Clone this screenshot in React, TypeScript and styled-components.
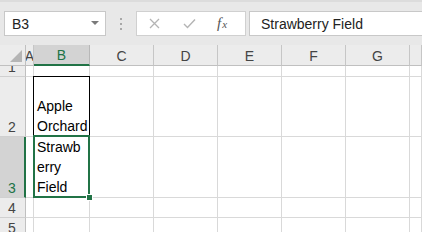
import React from "react";
import styled, { createGlobalStyle, css } from "styled-components";

const Global = createGlobalStyle`
  html, body { margin: 0; padding: 0; background: #ffffff; }
  body { width: 422px; height: 232px; overflow: hidden; font-family: "Liberation Sans", Arial, sans-serif; }
`;

const Page = styled.div`
  width: 422px;
  height: 232px;
  overflow: hidden;
  display: flex;
  flex-direction: column;
`;

const Toolbar = styled.div`
  height: 45px;
  flex: none;
  box-sizing: border-box;
  background: #e8e8e8;
  border-top: 2px solid #dcdcdc;
  padding: 9px 0 0 4px;
  display: flex;
  align-items: flex-start;
`;

const NameBox = styled.div`
  width: 102px;
  height: 25px;
  box-sizing: border-box;
  background: #fff;
  border: 1px solid #c8c8c8;
  display: flex;
  align-items: center;
  justify-content: space-between;
  padding: 0 6px 0 7px;
  font-size: 14px;
  color: #222;
`;

const Caret = styled.span`
  width: 0;
  height: 0;
  border-left: 4px solid transparent;
  border-right: 4px solid transparent;
  border-top: 4px solid #7a7a7a;
  margin-top: -2px;
`;

const Grip = styled.div`
  width: 30px;
  height: 25px;
  display: flex;
  flex-direction: column;
  align-items: center;
  justify-content: center;
  gap: 3px;
`;

const Dot = styled.span`
  width: 2px;
  height: 2px;
  background: #a8a8a8;
`;

const FxButtons = styled.div`
  width: 110px;
  height: 25px;
  box-sizing: border-box;
  background: #fff;
  border: 1px solid #d0d0d0;
  display: flex;
  align-items: center;
  padding-left: 12px;
  gap: 23px;
`;

const Fx = styled.span`
  font-family: "Liberation Serif", "Times New Roman", serif;
  font-style: italic;
  color: #555;
  font-size: 15px;
  display: flex;
  align-items: baseline;
  margin-left: -2px;
  sub {
    font-size: 11px;
    vertical-align: baseline;
    margin-left: 1px;
  }
`;

const FormulaInput = styled.div`
  flex: 1;
  margin-left: 3px;
  height: 25px;
  box-sizing: border-box;
  background: #fff;
  border: 1px solid #c8c8c8;
  border-right: none;
  display: flex;
  align-items: center;
  padding-left: 11px;
  font-size: 14px;
  color: #222;
  white-space: nowrap;
`;

const Sheet = styled.div`
  display: grid;
  grid-template-columns: 26px 8px 56px 64px 64px 64px 64px 64px 1fr;
  grid-template-rows: 21px 11px 60px 61px 20px 20px;
  flex: none;
`;

const cellBase = css`
  box-sizing: border-box;
  overflow: hidden;
  min-width: 0;
`;

const Corner = styled.div`
  ${cellBase};
  background: #ececec;
  border-right: 1px solid #c0c0c0;
  border-bottom: 1px solid #c0c0c0;
  display: flex;
  align-items: flex-end;
  justify-content: flex-end;
  padding: 0 3px 3px 0;
`;

const ColHeader = styled.div<{ $sel?: boolean }>`
  ${cellBase};
  background: ${(p) => (p.$sel ? "#d3d3d3" : "#ececec")};
  color: ${(p) => (p.$sel ? "#217346" : "#444")};
  border-right: 1px solid ${(p) => (p.$sel ? "#b8b8b8" : "#c6c6c6")};
  border-bottom: ${(p) => (p.$sel ? "2px solid #217346" : "1px solid #c0c0c0")};
  display: flex;
  align-items: center;
  justify-content: center;
  font-size: 14px;
  padding-top: 1px;
`;

const RowHeader = styled.div<{ $sel?: boolean }>`
  ${cellBase};
  background: ${(p) => (p.$sel ? "#d3d3d3" : "#ececec")};
  color: ${(p) => (p.$sel ? "#217346" : "#444")};
  border-right: ${(p) => (p.$sel ? "2px solid #217346" : "1px solid #c0c0c0")};
  border-bottom: 1px solid #d0d0d0;
  display: flex;
  align-items: flex-end;
  justify-content: center;
  font-size: 14px;
  line-height: 18px;
  padding-right: ${(p) => (p.$sel ? "0" : "1px")};
`;

const Cell = styled.div<{ $boxed?: boolean; $selected?: boolean }>`
  ${cellBase};
  position: relative;
  overflow: ${(p) => (p.$boxed || p.$selected ? "visible" : "hidden")};
  z-index: ${(p) => (p.$selected ? 3 : p.$boxed ? 2 : 0)};
  background: #fff;
  border-right: 1px solid #d9d9d9;
  border-bottom: 1px solid #d9d9d9;
  display: flex;
  flex-direction: column;
  justify-content: flex-end;
  padding: 0 2px 0 3px;
  font-size: 14px;
  line-height: 20px;
  color: #000;
  white-space: nowrap;
  ${(p) =>
    p.$boxed &&
    css`
      &::after {
        content: "";
        position: absolute;
        top: -1px;
        left: -1px;
        right: -1px;
        bottom: -1px;
        border: 1px solid #000;
        pointer-events: none;
      }
    `}
  ${(p) =>
    p.$selected &&
    css`
      &::after {
        content: "";
        position: absolute;
        top: -2px;
        left: -1px;
        right: -1px;
        bottom: -1px;
        border: 2px solid #217346;
        pointer-events: none;
      }
    `}
`;

const Handle = styled.span`
  position: absolute;
  right: -4px;
  bottom: -4px;
  width: 5px;
  height: 5px;
  background: #217346;
  border: 1px solid #fff;
  z-index: 4;
`;

const Line = styled.span`
  display: block;
`;

const columns = ["A", "B", "C", "D", "E", "F", "G", ""];
const rows: { n: string; selected?: boolean }[] = [
  { n: "1" },
  { n: "2" },
  { n: "3", selected: true },
  { n: "4" },
  { n: "5" },
];

const content: Record<string, string[]> = {
  B2: ["Apple", "Orchard"],
  B3: ["Strawb", "erry", "Field"],
};

export default function App() {
  return (
    <Page>
      <Global />
      <Toolbar>
        <NameBox>
          <span>B3</span>
          <Caret />
        </NameBox>
        <Grip>
          <Dot />
          <Dot />
          <Dot />
        </Grip>
        <FxButtons>
          <svg width="11" height="11" viewBox="0 0 11 11">
            <path d="M1 1 L10 10 M10 1 L1 10" stroke="#b4b4b4" strokeWidth="1.3" fill="none" />
          </svg>
          <svg width="13" height="11" viewBox="0 0 13 11">
            <path d="M1 6 L4.5 9.5 L12 1.5" stroke="#b4b4b4" strokeWidth="1.4" fill="none" />
          </svg>
          <Fx>
            f<sub>x</sub>
          </Fx>
        </FxButtons>
        <FormulaInput>Strawberry Field</FormulaInput>
      </Toolbar>
      <Sheet>
        <Corner>
          <svg width="12" height="12" viewBox="0 0 12 12">
            <polygon points="12,0 12,12 0,12" fill="#b5b5b5" />
          </svg>
        </Corner>
        {columns.map((c, i) => (
          <ColHeader key={i} $sel={c === "B"}>
            {c}
          </ColHeader>
        ))}
        {rows.map((r) => (
          <React.Fragment key={r.n}>
            <RowHeader $sel={r.selected}>{r.n}</RowHeader>
            {columns.map((c, i) => {
              const id = c + r.n;
              const lines = content[id];
              return (
                <Cell key={i} $boxed={id === "B2"} $selected={id === "B3"}>
                  {lines && lines.map((l, k) => <Line key={k}>{l}</Line>)}
                  {id === "B3" && <Handle />}
                </Cell>
              );
            })}
          </React.Fragment>
        ))}
      </Sheet>
    </Page>
  );
}
